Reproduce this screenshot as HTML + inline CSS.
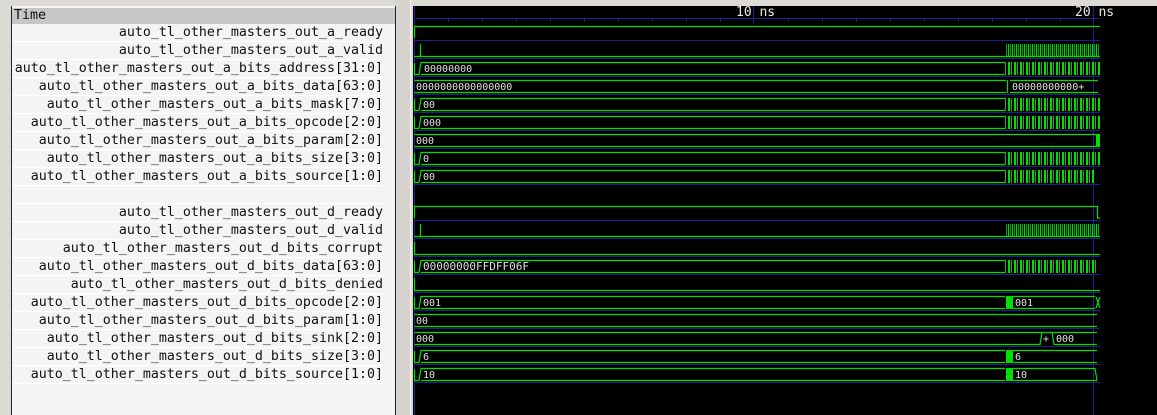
<!DOCTYPE html>
<html><head><meta charset="utf-8"><style>
html,body{margin:0;padding:0;width:1157px;height:415px;overflow:hidden;background:#dcdad5;}
#left{position:absolute;left:11px;top:6px;width:383px;height:409px;background:#f4f4f4;border-left:1px solid #222;border-right:1px solid #222;}
.r{position:absolute;left:0;width:371px;height:17px;border-bottom:1px solid #fff;font:13.3px "DejaVu Sans Mono","Liberation Mono",monospace;color:#111;text-align:right;line-height:17px;white-space:pre;}
#time{position:absolute;left:0;top:2px;width:383px;height:16px;background:#c6c6c6;font:13.3px "DejaVu Sans Mono",monospace;color:#111;line-height:16px;padding-left:2px;box-sizing:border-box;}
svg{position:absolute;left:0;top:0;}
</style></head><body>
<div style="position:absolute;left:395px;top:0;width:15px;height:415px;background:#d6d3ce;border-right:1px solid #f0f0f0"></div>
<div id="left">
<div id="time">Time</div>
<div class="r" style="top:18px">auto_tl_other_masters_out_a_ready</div>
<div class="r" style="top:36px">auto_tl_other_masters_out_a_valid</div>
<div class="r" style="top:54px">auto_tl_other_masters_out_a_bits_address[31:0]</div>
<div class="r" style="top:72px">auto_tl_other_masters_out_a_bits_data[63:0]</div>
<div class="r" style="top:90px">auto_tl_other_masters_out_a_bits_mask[7:0]</div>
<div class="r" style="top:108px">auto_tl_other_masters_out_a_bits_opcode[2:0]</div>
<div class="r" style="top:126px">auto_tl_other_masters_out_a_bits_param[2:0]</div>
<div class="r" style="top:144px">auto_tl_other_masters_out_a_bits_size[3:0]</div>
<div class="r" style="top:162px">auto_tl_other_masters_out_a_bits_source[1:0]</div>
<div class="r" style="top:180px"> </div>
<div class="r" style="top:198px">auto_tl_other_masters_out_d_ready</div>
<div class="r" style="top:216px">auto_tl_other_masters_out_d_valid</div>
<div class="r" style="top:234px">auto_tl_other_masters_out_d_bits_corrupt</div>
<div class="r" style="top:252px">auto_tl_other_masters_out_d_bits_data[63:0]</div>
<div class="r" style="top:270px">auto_tl_other_masters_out_d_bits_denied</div>
<div class="r" style="top:288px">auto_tl_other_masters_out_d_bits_opcode[2:0]</div>
<div class="r" style="top:306px">auto_tl_other_masters_out_d_bits_param[1:0]</div>
<div class="r" style="top:324px">auto_tl_other_masters_out_d_bits_sink[2:0]</div>
<div class="r" style="top:342px">auto_tl_other_masters_out_d_bits_size[3:0]</div>
<div class="r" style="top:360px">auto_tl_other_masters_out_d_bits_source[1:0]</div>
</div>
<svg width="1157" height="415" xmlns="http://www.w3.org/2000/svg">
<defs>
<pattern id="dn" width="4" height="20" patternUnits="userSpaceOnUse"><rect x="0" y="0" width="1" height="20" fill="#00e000"/><rect x="2" y="0" width="1" height="20" fill="#00a000"/></pattern>
<pattern id="db" width="6" height="20" patternUnits="userSpaceOnUse"><rect x="0" y="0" width="2" height="20" fill="#00e000"/><rect x="3" y="0" width="1" height="20" fill="#00c000"/></pattern>
</defs>
<rect x="413" y="6" width="744" height="409" fill="#000"/>
<g stroke="#20208a" stroke-width="1" fill="none">
<line x1="414" y1="18.5" x2="1100" y2="18.5"/>
<path d="M414.5 6V415M753.5 6V24M1093.5 6V415"/>
<path d="M448.5 18V22M482.5 18V22M516.5 18V22M550.5 18V22M584.5 18V22M618.5 18V22M652.5 18V22M686.5 18V22M720.5 18V22M788.5 18V22M822.5 18V22M856.5 18V22M890.5 18V22M924.5 18V22M958.5 18V22M992.5 18V22M1026.5 18V22M1060.5 18V22"/>
<path d="M414 40.5H1100M414 58.5H1100M414 76.5H1100M414 94.5H1100M414 112.5H1100M414 130.5H1100M414 148.5H1100M414 166.5H1100M414 184.5H1100M414 220.5H1100M414 238.5H1100M414 256.5H1100M414 274.5H1100M414 292.5H1100M414 310.5H1100M414 328.5H1100M414 346.5H1100M414 364.5H1100M414 382.5H1100"/>
</g>
<g font-family="DejaVu Sans Mono,Liberation Mono,monospace" font-size="13" fill="#e8e8e8">
<text x="736" y="16">10 ns</text><text x="1075" y="16">20 ns</text>
</g>
<g stroke="#00e000" stroke-width="1.2" fill="none">
<!-- a_ready -->
<path d="M414.5 38V26.5H1100"/>
<!-- a_valid -->
<path d="M414 56.5H1100M420.5 44V56"/>
<rect x="1005" y="44" width="95" height="12" fill="url(#dn)" stroke="none"/>
<!-- address t=60 -->
<path d="M414.5 63V74.5H419L421 62.5H1005M421 74.5H1005"/>
<rect x="1005" y="62" width="95" height="13" fill="url(#db)" stroke="none"/>
<!-- data t=78 -->
<path d="M414.5 80.5H1006M414.5 92.5H1006M1010 80.5H1098M1010 92.5H1098M1007.5 80V93"/>
<!-- mask t=96 -->
<path d="M414.5 99V110.5H419L421 98.5H1005M421 110.5H1005"/>
<rect x="1005" y="98" width="95" height="13" fill="url(#db)" stroke="none"/>
<!-- opcode t=114 -->
<path d="M414.5 117V128.5H419L421 116.5H1005M421 128.5H1005"/>
<rect x="1005" y="116" width="95" height="13" fill="url(#db)" stroke="none"/>
<!-- param t=132 -->
<path d="M414.5 134.5H1096M414.5 146.5H1096"/>
<rect x="1096" y="134" width="4" height="13" fill="#00e000" stroke="none"/>
<!-- size t=150 -->
<path d="M414.5 153V164.5H419L421 152.5H1005M421 164.5H1005"/>
<rect x="1005" y="152" width="95" height="13" fill="url(#db)" stroke="none"/>
<!-- source t=168 -->
<path d="M414.5 171V182.5H419L421 170.5H1005M421 182.5H1005"/>
<rect x="1005" y="170" width="90" height="13" fill="url(#db)" stroke="none"/>
<!-- d_ready t=204 -->
<path d="M414.5 218V206.5H1097.5V218H1100"/>
<!-- d_valid t=222 -->
<path d="M414 236.5H1100M420.5 224V236"/>
<rect x="1005" y="224" width="95" height="12" fill="url(#dn)" stroke="none"/>
<!-- corrupt t=240 -->
<path d="M414.5 242V254.5H1100"/>
<!-- d_data t=258 -->
<path d="M414.5 261V272.5H419L421 260.5H1005M421 272.5H1005"/>
<rect x="1005" y="260" width="92" height="13" fill="url(#db)" stroke="none"/>
<!-- denied t=276 -->
<path d="M414.5 278V290.5H1100"/>
<!-- d_opcode t=294 -->
<path d="M414.5 297V308.5H419L421 296.5H1005M421 308.5H1005M1013 296.5H1095M1013 308.5H1095M1096 297L1100 308M1096 308L1100 297"/>
<rect x="1006" y="296" width="7" height="13" fill="#00e000" stroke="none"/>
<!-- d_param t=312 -->
<path d="M414.5 314.5H1097M414.5 326.5H1097"/>
<!-- d_sink t=330 -->
<path d="M414.5 332.5H1097M414.5 344.5H1040L1042 332.5H1052L1054 344.5H1097"/>
<!-- d_size t=348 -->
<path d="M414.5 351V362.5H419L421 350.5H1005M421 362.5H1005M1013 350.5H1097M1013 362.5H1097"/>
<rect x="1006" y="350" width="7" height="13" fill="#00e000" stroke="none"/>
<!-- d_source t=366 -->
<path d="M414.5 369V380.5H419L421 368.5H1005M421 380.5H1005M1013 368.5H1095L1097 380.5M1013 380.5H1097"/>
<rect x="1006" y="368" width="7" height="13" fill="#00e000" stroke="none"/>
</g>
<g font-family="DejaVu Sans Mono,Liberation Mono,monospace" font-size="10" fill="#e0e0e0">
<text x="424" y="72">00000000</text>
<text x="416" y="90">0000000000000000</text>
<text x="1012" y="90">00000000000+</text>
<text x="423" y="108">00</text>
<text x="423" y="126">000</text>
<text x="416" y="144">000</text>
<text x="423" y="162">0</text>
<text x="423" y="180">00</text>
<text x="423" y="270" font-size="11">00000000FFDFF06F</text>
<text x="423" y="306">001</text>
<text x="1015" y="306">001</text>
<text x="416" y="324">00</text>
<text x="416" y="342">000</text>
<text x="1043" y="342">+</text>
<text x="1056" y="342">000</text>
<text x="423" y="360">6</text>
<text x="1015" y="360">6</text>
<text x="423" y="378">10</text>
<text x="1015" y="378">10</text>
</g>
</svg>
</body></html>
